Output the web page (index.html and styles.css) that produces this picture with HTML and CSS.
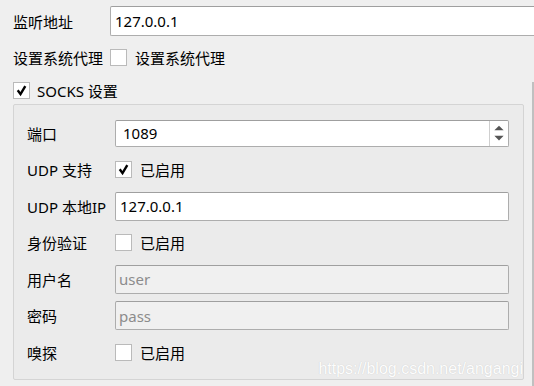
FILE: index.html
```html
<!DOCTYPE html>
<html lang="zh-CN">
<head>
    <meta charset="UTF-8">
    <title>代理设置</title>
    <link rel="stylesheet" href="styles.css">
</head>
<body>
    <div class="form">
        <div class="row row-top">
            <label class="label">监听地址</label>
            <div class="field wide">127.0.0.1</div>
        </div>

        <div class="row">
            <label class="label">设置系统代理</label>
            <span class="check"></span>
            <span class="check-text">设置系统代理</span>
        </div>

        <div class="socks">
            <div class="socks-main">
                <div class="socks-head">
                    <span class="check on">
                        <svg viewBox="0 0 17 17" width="17" height="17"><polyline points="4.2,8.3 7.4,12.6 12.8,3.6" fill="none" stroke="#000" stroke-width="2.7"/></svg>
                    </span>
                    <span class="check-text">SOCKS 设置</span>
                </div>

                <div class="group">
                    <div class="grid">
                        <label class="label">端口</label>
                        <div class="field spin">
                            <span class="spin-value">1089</span>
                            <span class="spin-btns">
                                <svg viewBox="0 0 18 27" width="18" height="25"><polygon points="4,10 14,10 9,5" fill="#555"/><polygon points="4,16 14,16 9,21" fill="#555"/></svg>
                            </span>
                        </div>

                        <label class="label">UDP 支持</label>
                        <div class="opt">
                            <span class="check on">
                                <svg viewBox="0 0 17 17" width="17" height="17"><polyline points="4.2,8.3 7.4,12.6 12.8,3.6" fill="none" stroke="#000" stroke-width="2.7"/></svg>
                            </span>
                            <span class="check-text">已启用</span>
                        </div>

                        <label class="label">UDP 本地IP</label>
                        <div class="field">127.0.0.1</div>

                        <label class="label">身份验证</label>
                        <div class="opt">
                            <span class="check"></span>
                            <span class="check-text">已启用</span>
                        </div>

                        <label class="label">用户名</label>
                        <div class="field off">user</div>

                        <label class="label">密码</label>
                        <div class="field off">pass</div>

                        <label class="label">嗅探</label>
                        <div class="opt">
                            <span class="check"></span>
                            <span class="check-text">已启用</span>
                        </div>
                    </div>
                    <span class="mark">https://blog.csdn.net/angangi</span>
                </div>
            </div>
            <div class="scroll-edge"></div>
        </div>
    </div>
</body>
</html>
```

FILE: styles.css
```css
body {
    margin: 0;
    width: 534px;
    height: 386px;
    overflow: hidden;
    background: #efefef;
    font-family: "Noto Sans", "Noto Sans CJK SC", sans-serif;
    font-size: 15px;
    color: #000;
}

.form {
    padding-left: 13px;
}

.row {
    display: flex;
    align-items: center;
    height: 32px;
    margin-top: 5px;
}

.row-top {
    height: 30px;
    margin-top: 6px;
}

.row .label {
    width: 97px;
    flex: none;
}

.field {
    box-sizing: border-box;
    height: 29px;
    display: flex;
    align-items: center;
    padding: 0 4px;
    background: #fff;
    border: 1px solid #adadad;
    border-top-color: #9f9f9f;
    border-radius: 2px;
    white-space: nowrap;
}

.wide {
    height: 30px;
    flex: 1;
    border-right: none;
    border-radius: 2px 0 0 2px;
}

.field.off {
    background: #f0f0f0;
    color: #8c8c8c;
    padding-left: 3px;
}

.check {
    box-sizing: border-box;
    width: 17px;
    height: 17px;
    flex: none;
    background: #fff;
    border: 1px solid #bababa;
    display: flex;
    align-items: center;
    justify-content: center;
}

.check svg {
    display: block;
}

.check-text {
    margin-left: 8px;
}

.socks {
    display: flex;
    margin-top: 5px;
}

.socks-main {
    flex: 1;
}

.socks-head {
    display: flex;
    align-items: center;
    height: 24px;
}

.socks-head .check-text {
    margin-left: 7px;
}

.scroll-edge {
    width: 2px;
    margin-top: 4px;
    height: 304px;
    background: #c0c0c0;
}

.group {
    position: relative;
    box-sizing: border-box;
    width: 511px;
    height: 276px;
    margin-top: 2px;
    padding: 13px 14px 12px 13px;
    background: #ebebeb;
    border: 1px solid #d4d4d4;
    border-radius: 2px;
}

.grid {
    display: grid;
    grid-template-columns: 88px 394px;
    grid-auto-rows: 30px;
    row-gap: 6.5px;
    align-items: center;
}

.spin {
    height: 27px;
    padding: 0;
}

.spin-value {
    flex: 1;
    padding-left: 7px;
}

.spin-btns {
    width: 18px;
    height: 100%;
    border-left: 1px solid #cfcfcf;
    display: flex;
    align-items: center;
}

.opt {
    display: flex;
    align-items: center;
}

.mark {
    position: absolute;
    right: 0;
    bottom: 1px;
    font-family: "Liberation Sans", sans-serif;
    font-size: 16px;
    color: #fdfdfd;
    text-shadow: 0 0 1px #c4c4c4;
}
```
